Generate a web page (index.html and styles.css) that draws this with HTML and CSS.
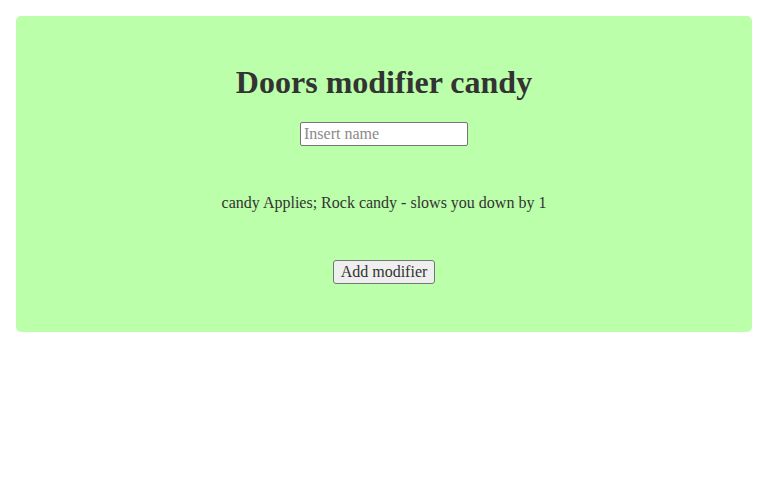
FILE: index.html
```html
<!DOCTYPE html>
<html>
<head>
<title>Doors modifier candy</title>
<meta name="viewport" content="width=device-width, initial-scale=1.0">
<link rel="stylesheet" href="styles.css">
</head>
<body>

<main class="panel">
  <h1>Doors modifier candy</h1>
  <input type="text" class="name" placeholder="Insert name">
  <p class="result">candy Applies; Rock candy - slows you down by 1</p>
  <button class="add">Add modifier</button>
</main>

</body>
</html>
```

FILE: styles.css
```css
body {
   color: #333;
   font-family: "Liberation Serif", serif;
   margin: 8px;}

.panel {
   background-color: #bbffaa;
   border-radius: 5px;
   box-sizing: border-box;
   display: flex;
   flex-direction: column;
   align-items: center;
   margin: 8px;
   padding: 48px 20px 48px 20px;
   height: 316px;}

.panel h1 {
   font-size: 32px;
   line-height: 37px;
   margin: 0 0 21px 0;}

.name {
   border: 1px solid #767676;
   border-radius: 2px;
   box-sizing: border-box;
   font-family: "Liberation Serif", serif;
   font-size: 16px;
   padding: 1px 3px;
   height: 24px; width: 168px;}

.name::placeholder {
   color: #8a8a8a;}

.result {
   font-size: 16px;
   line-height: 18px;
   margin: 48px 0 48px 0;}

.add {
   background-color: #efefef;
   border: 1px solid #767676;
   border-radius: 3px;
   color: #333;
   font-family: "Liberation Serif", serif;
   font-size: 16px;
   padding: 1px 7px;
   height: 24px;}
```
